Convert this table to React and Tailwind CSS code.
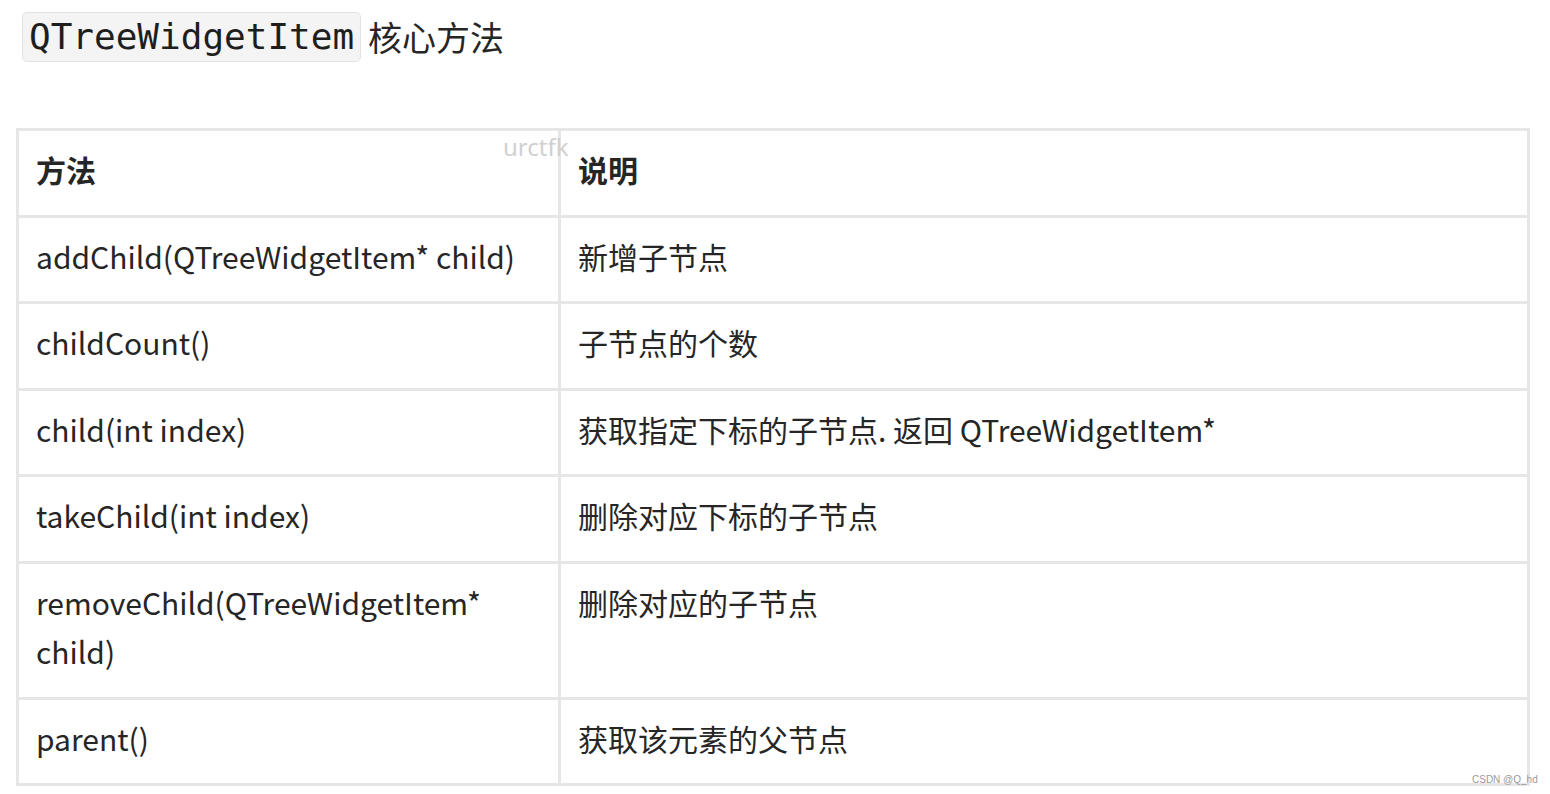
const rows = [
  ['addChild(QTreeWidgetItem* child)', '新增子节点'],
  ['childCount()', '子节点的个数'],
  ['child(int index)', '获取指定下标的子节点. 返回 QTreeWidgetItem*'],
  ['takeChild(int index)', '删除对应下标的子节点'],
  ['removeChild(QTreeWidgetItem* child)', '删除对应的子节点'],
  ['parent()', '获取该元素的父节点'],
]

const cellClasses =
  'border-[3px] border-[#e6e6e6] px-[17px] pt-[14px] pb-[20px] align-top leading-[49.5px]'

function App() {
  return (
    <div className="relative h-[794px] w-[1550px] overflow-hidden bg-white font-['Noto_Sans_CJK_SC',sans-serif] text-[#262626]">
      <div className="flex items-center pl-[22px] pt-[12px]">
        <code className="rounded-[5px] border border-[#e2e2e2] bg-[#f4f4f4] px-[6px] font-['DejaVu_Sans_Mono',monospace] text-[36px] leading-[48px] text-[#1e1e1e]">
          QTreeWidgetItem
        </code>
        <span className="ml-[7px] text-[34px] leading-[48px]">核心方法</span>
      </div>

      <table className="ml-[16px] mt-[66px] w-[1514px] table-fixed border-collapse text-[30px]">
        <colgroup>
          <col className="w-[542px]" />
          <col />
        </colgroup>
        <thead>
          <tr>
            <th className={`${cellClasses} text-left font-bold`}>方法</th>
            <th className={`${cellClasses} text-left font-bold`}>说明</th>
          </tr>
        </thead>
        <tbody>
          {rows.map(([method, desc]) => (
            <tr key={method}>
              <td className={cellClasses}>{method}</td>
              <td className={cellClasses}>{desc}</td>
            </tr>
          ))}
        </tbody>
      </table>

      {/* video watermark */}
      <span className="absolute left-[503px] top-[129px] font-['Noto_Sans',sans-serif] text-[24px] text-[#d0d0d0]">
        urctfk
      </span>
      <span className="absolute left-[1472px] top-[772px] font-['Liberation_Sans',sans-serif] text-[10px] text-[#9a9a9a]">
        CSDN @Q_hd
      </span>
    </div>
  )
}

export default App
